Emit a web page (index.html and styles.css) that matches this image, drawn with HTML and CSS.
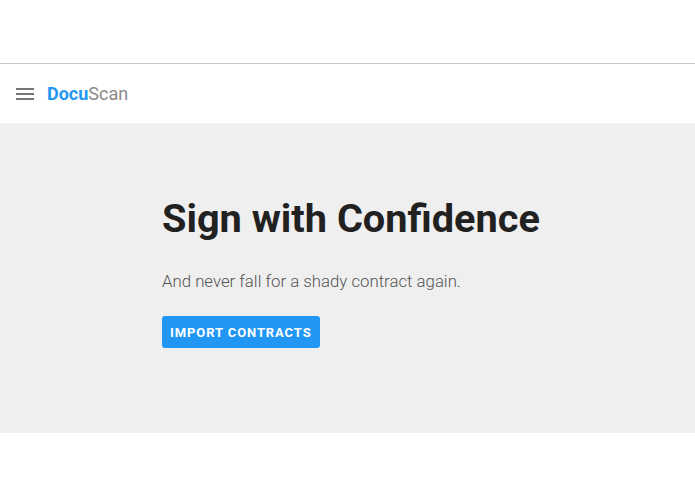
FILE: index.html
```html
<!DOCTYPE html>
<html lang="en">
<head>
    <meta charset="UTF-8">
    <meta name="viewport" content="width=device-width, initial-scale=1.0">
    <title>DocuScan</title>
    <link rel="stylesheet" href="styles.css">
</head>
<body>
    <div class="topbar"></div>
    <nav class="navbar">
        <svg class="menu-icon" width="18" height="12" viewBox="0 0 18 12">
            <rect x="0" y="0" width="18" height="2" fill="#757575"/>
            <rect x="0" y="5" width="18" height="2" fill="#757575"/>
            <rect x="0" y="10" width="18" height="2" fill="#757575"/>
        </svg>
        <span class="brand"><b>Docu</b>Scan</span>
    </nav>
    <section class="hero">
        <div class="hero-inner">
            <h1>Sign with Confidence</h1>
            <p>And never fall for a shady contract again.</p>
            <button>IMPORT CONTRACTS</button>
        </div>
    </section>
</body>
</html>
```
FILE: styles.css
```css
body {
    margin: 0;
    font-family: Roboto, 'Noto Sans', sans-serif;
    background: #fff;
}
.topbar {
    height: 63px;
    border-bottom: 1px solid #c8c8c8;
}
.navbar {
    height: 59px;
    display: flex;
    align-items: center;
    padding-left: 16px;
}
.menu-icon {
    margin-right: 13px;
}
.brand {
    font-size: 18px;
    color: #8a8a8a;
}
.brand b {
    color: #2196f3;
    font-weight: 700;
}
.hero {
    background: #efefef;
    height: 310px;
}
.hero-inner {
    padding: 72px 0 0 162px;
}
h1 {
    margin: 0;
    font-size: 39.7px;
    font-weight: 700;
    color: #212121;
    line-height: 48px;
}
p {
    margin: 28px 0 0;
    font-size: 16.8px;
    line-height: 20px;
    font-weight: 300;
    color: #555;
}
button {
    display: block;
    margin-top: 25px;
    height: 32px;
    padding: 0 8px;
    border: none;
    border-radius: 3px;
    background: #2196f3;
    color: #fff;
    font-family: Roboto, sans-serif;
    font-weight: 700;
    font-size: 13px;
    letter-spacing: 0.9px;
    white-space: nowrap;
}
```
